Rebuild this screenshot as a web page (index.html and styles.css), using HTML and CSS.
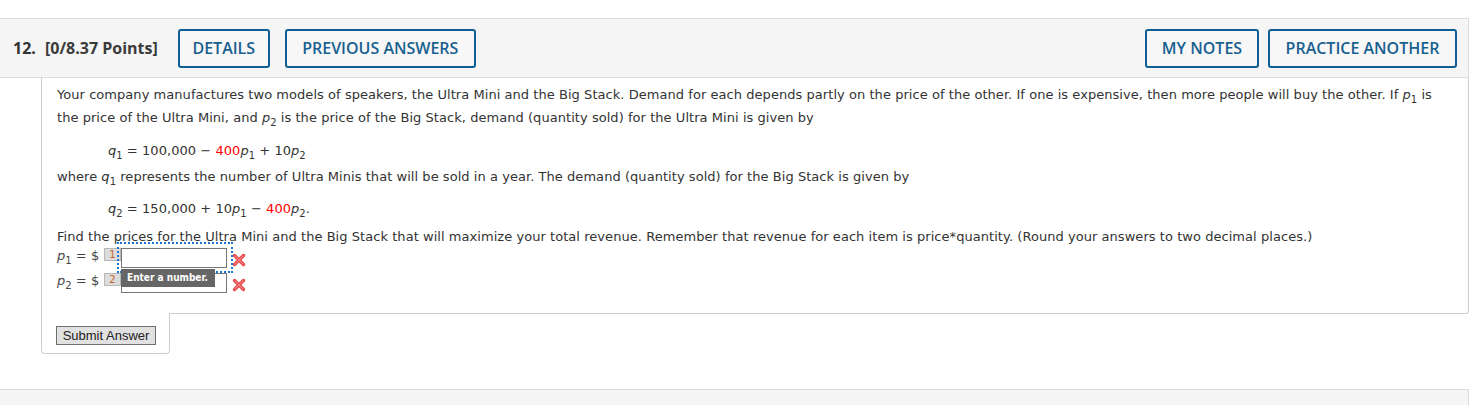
FILE: index.html
```html
<!DOCTYPE html>
<html>
<head>
<meta charset="utf-8">
<link rel="stylesheet" href="styles.css">
</head>
<body>
<div class="top-gap"></div>
<div class="qhead">
  <span class="qnum">12.</span>
  <span class="qpts">[0/8.37 Points]</span>
  <div class="btns left">
    <span class="hbtn b-details">DETAILS</span>
    <span class="hbtn b-prev">PREVIOUS ANSWERS</span>
  </div>
  <div class="btns right">
    <span class="hbtn b-notes">MY NOTES</span>
    <span class="hbtn b-practice">PRACTICE ANOTHER</span>
  </div>
</div>
<div class="qbody">
  <p class="para">Your company manufactures two models of speakers, the Ultra Mini and the Big Stack. Demand for each depends partly on the price of the other. If one is expensive, then more people will buy the other. If <i class="v">p</i><sub>1</sub> is the price of the Ultra Mini, and <i class="v">p</i><sub>2</sub> is the price of the Big Stack, demand (quantity sold) for the Ultra Mini is given by</p>
  <p class="eq eq1"><i class="v">q</i><sub>1</sub> = 100,000 − <span class="red">400</span><i class="v">p</i><sub>1</sub> + 10<i class="v">p</i><sub>2</sub></p>
  <p class="line where">where <i class="v">q</i><sub>1</sub> represents the number of Ultra Minis that will be sold in a year. The demand (quantity sold) for the Big Stack is given by</p>
  <p class="eq eq2"><i class="v">q</i><sub>2</sub> = 150,000 + 10<i class="v">p</i><sub>1</sub> − <span class="red">400</span><i class="v">p</i><sub>2</sub>.</p>
  <p class="line find">Find the prices for the Ultra Mini and the Big Stack that will maximize your total revenue. Remember that revenue for each item is price*quantity. (Round your answers to two decimal places.)</p>
  <div class="answers">
    <div class="arow r1">
      <span class="alabel"><i class="v">p</i><sub>1</sub> = $</span>
      <span class="badge">1</span>
      <span class="abox"></span>
      <svg class="xmark" width="14" height="14" viewBox="0 0 14 14"><path d="M2.5 2.5 L11.5 11.5 M11.5 2.5 L2.5 11.5" stroke="#e8474a" stroke-width="3.4" stroke-linecap="round"/><path d="M2.8 2.8 L11.2 11.2 M11.2 2.8 L2.8 11.2" stroke="#f77f80" stroke-width="1.2" stroke-linecap="round"/></svg>
    </div>
    <div class="arow r2">
      <span class="alabel"><i class="v">p</i><sub>2</sub> = $</span>
      <span class="badge">2</span>
      <span class="abox"></span>
      <svg class="xmark" width="14" height="14" viewBox="0 0 14 14"><path d="M2.5 2.5 L11.5 11.5 M11.5 2.5 L2.5 11.5" stroke="#e8474a" stroke-width="3.4" stroke-linecap="round"/><path d="M2.8 2.8 L11.2 11.2 M11.2 2.8 L2.8 11.2" stroke="#f77f80" stroke-width="1.2" stroke-linecap="round"/></svg>
    </div>
    <div class="focusring"></div>
    <div class="tip">Enter a number.</div>
  </div>
</div>
<div class="submitbox"><span class="submit">Submit Answer</span></div>
<div class="nexthead"></div>
</body>
</html>
```

FILE: styles.css
```css
html, body {
  margin: 0;
  padding: 0;
  background: #fff;
  overflow: hidden;
}
body {
  width: 1478px;
  height: 405px;
  font-family: "DejaVu Sans", Verdana, sans-serif;
  color: #333;
}
.top-gap { height: 18px; }
.qhead {
  box-sizing: border-box;
  width: 1469px;
  height: 60px;
  background: #f5f5f5;
  border-top: 1px solid #dcdcdc;
  border-right: 1px solid #dcdcdc;
  border-bottom: 1px solid #dcdcdc;
  display: flex;
  align-items: center;
  padding-left: 13px;
  padding-right: 11px;
  font-family: "Open Sans", sans-serif;
}
.qnum {
  font-weight: 700;
  font-size: 16px;
  color: #333;
  width: 32px;
}
.qpts {
  font-weight: 700;
  font-size: 16px;
  color: #3b3b3b;
}
.btns { display: flex; }
.btns.left { margin-left: 20px; gap: 15px; }
.btns.right { margin-left: auto; gap: 9px; }
.hbtn {
  box-sizing: border-box;
  height: 39px;
  border: 2px solid #0f5f94;
  border-radius: 3px;
  color: #17608f;
  font-size: 16px;
  font-weight: 600;
  display: flex;
  align-items: center;
  justify-content: center;
  background: #f7f7f7;
}
.b-details { width: 92px; }
.b-prev { width: 191px; }
.b-notes { width: 114px; }
.b-practice { width: 189px; }

.qbody {
  box-sizing: border-box;
  margin-left: 41px;
  width: 1428px;
  height: 236px;
  border-left: 1px solid #cfcfcf;
  border-right: 1px solid #cfcfcf;
  border-bottom: 1px solid #cfcfcf;
  border-bottom-right-radius: 3px;
  padding: 5px 0 0 15px;
  font-size: 13px;
  letter-spacing: 0.05px;
}
.qbody .para { margin: 0; line-height: 23px; padding-right: 20px; }
.v { font-style: italic; letter-spacing: 0; }
sub { font-size: 10px; vertical-align: -4px; line-height: 0; }
.red { color: #f00; }
.qbody .eq { padding-left: 51px; line-height: 20px; margin: 0; }
.qbody .line { line-height: 20px; margin: 0; }
.qbody .eq1 { margin-top: 12px; }
.qbody .where { margin-top: 6px; }
.qbody .eq2 { margin-top: 12px; }
.qbody .find { margin-top: 8px; }

.answers {
  position: relative;
  margin-top: -5px;
}
.arow {
  display: flex;
  align-items: flex-start;
  height: 24px;
}
.r1 { padding-top: 6px; }
.r2 { padding-top: 1px; }
.alabel {
  width: 47px;
  line-height: 16px;
  color: #444;
}
.badge {
  box-sizing: border-box;
  width: 17px;
  height: 13px;
  background: #dcdcdc;
  border: 1px solid #b8b8b8;
  color: #c6642a;
  font-size: 10px;
  line-height: 11px;
  text-align: center;
  letter-spacing: 0;
}
.abox {
  box-sizing: border-box;
  width: 106px;
  height: 20px;
  border: 1px solid #767676;
  background: #fff;
}
.xmark { margin-left: 5px; margin-top: 5px; }
.focusring {
  position: absolute;
  left: 60px;
  top: 0px;
  width: 116px;
  height: 31px;
  box-sizing: border-box;
  border: 2px dotted #1b74d0;
}
.tip {
  position: absolute;
  left: 64px;
  top: 27px;
  width: 94px;
  height: 18px;
  background: #666;
  color: #fff;
  font-family: "DejaVu Sans Condensed", "DejaVu Sans", sans-serif;
  font-weight: 700;
  font-size: 10px;
  line-height: 18px;
  padding-left: 6px;
  box-sizing: border-box;
  white-space: nowrap;
  overflow: hidden;
  letter-spacing: 0;
}
.submitbox {
  box-sizing: border-box;
  margin-left: 41px;
  margin-top: -1px;
  width: 129px;
  height: 41px;
  background: #fff;
  border-left: 1px solid #cfcfcf;
  border-right: 1px solid #cfcfcf;
  border-bottom: 1px solid #cfcfcf;
  border-bottom-left-radius: 4px;
  border-bottom-right-radius: 4px;
  padding: 12px 0 0 14px;
}
.submit {
  display: inline-block;
  box-sizing: border-box;
  width: 100px;
  height: 19px;
  background: #e1e1e1;
  border: 1px solid #6f6f6f;
  font-family: "Liberation Sans", Arial, sans-serif;
  font-size: 13px;
  line-height: 17px;
  text-align: center;
  color: #222;
}
.nexthead {
  margin-top: 35px;
  box-sizing: border-box;
  width: 1469px;
  height: 20px;
  background: #f5f5f5;
  border-top: 1px solid #dcdcdc;
  border-right: 1px solid #dcdcdc;
}
```
